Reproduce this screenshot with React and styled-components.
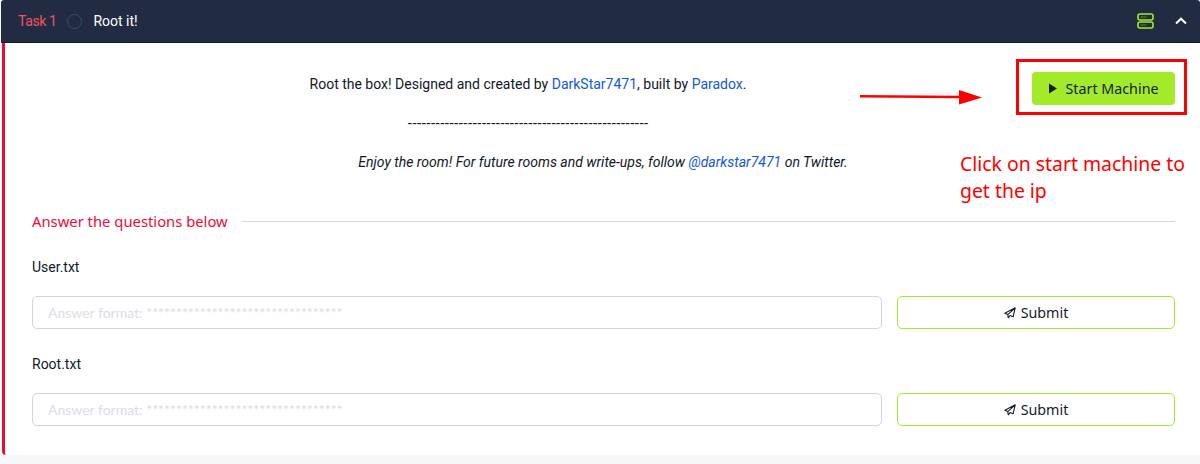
import React from "react";
import styled, { createGlobalStyle } from "styled-components";

const GlobalStyle = createGlobalStyle`
  html, body {
    margin: 0;
    padding: 0;
    background: #fff;
  }
  body {
    font-family: Roboto, "Noto Sans", sans-serif;
    color: #101828;
    overflow: hidden;
  }
`;

const Page = styled.div`
  width: 1200px;
  height: 464px;
  background: #f6f7f9;
  padding-left: 1px;
  box-sizing: border-box;
`;

const Task = styled.section`
  position: relative;
  height: 455px;
  display: flex;
  flex-direction: column;
  background: #fff;
`;

const Header = styled.header`
  height: 43px;
  flex: none;
  background: #212c42;
  border-bottom: 1px solid #141c2c;
  box-sizing: border-box;
  display: flex;
  align-items: center;
  padding: 0 13px 0 17px;
  border-radius: 3px 3px 0 0;
`;

const TaskNo = styled.span`
  font-size: 14px;
  letter-spacing: -0.4px;
  color: #f4525f;
`;

const Status = styled.span`
  width: 15px;
  height: 15px;
  box-sizing: border-box;
  margin-left: 11px;
  border: 1.5px solid #3f4b62;
  border-radius: 50%;
`;

const TaskName = styled.span`
  margin-left: 11px;
  font-size: 14px;
  color: #fff;
`;

const HeaderIcons = styled.div`
  margin-left: auto;
  display: flex;
  align-items: center;
  gap: 21px;
`;

const Body = styled.div`
  flex: 1;
  margin-left: 1px;
  border-left: 3px solid #ee0a38;
  border-radius: 0 0 0 4px;
  padding: 31px 25px 0 27px;
  display: flex;
  flex-direction: column;
`;

const Intro = styled.p`
  margin: 0 0 ${(p) => p.$gap}px;
  font-size: 14px;
  line-height: 20px;
  padding-left: ${(p) => p.$indent || 0}px;
  font-style: ${(p) => (p.$italic ? "italic" : "normal")};
  width: 992px;
  text-align: center;
  box-sizing: border-box;
`;

const DashLine = styled(Intro)`
  font-family: "Noto Sans", sans-serif;
  font-size: 14.4px;
`;

const Link = styled.a`
  color: #1257e0;
  text-decoration: none;
`;

const Divider = styled.div`
  display: flex;
  align-items: center;
  gap: 14px;
  margin-top: 39px;
  color: #ee0a38;
  font-family: "Noto Sans", sans-serif;
  font-size: 14.8px;
  line-height: 20px;
  &::after {
    content: "";
    flex: 1;
    height: 1px;
    background: #d6d8dc;
  }
`;

const Question = styled.div`
  margin-top: ${(p) => p.$top}px;
  font-size: 14px;
  line-height: 20px;
`;

const AnswerRow = styled.div`
  display: grid;
  grid-template-columns: 850px 278px;
  gap: 15px;
  margin-top: ${(p) => p.$top}px;
`;

const Input = styled.div`
  height: 33px;
  box-sizing: border-box;
  border: 1px solid #cfd4df;
  border-radius: 5px;
  padding: 0 15px;
  display: flex;
  align-items: center;
  font-family: Lato, sans-serif;
  font-size: 14px;
  color: #dadde6;
  white-space: nowrap;
`;

const SubmitButton = styled.button`
  height: 33px;
  box-sizing: border-box;
  background: #fff;
  border: 1.5px solid #a3ea2a;
  border-radius: 5px;
  display: flex;
  align-items: center;
  justify-content: center;
  gap: 5px;
  padding: 0;
  font-family: "Noto Sans", sans-serif;
  font-size: 14.3px;
  color: #151c2c;
`;

const StartBox = styled.div`
  position: absolute;
  left: 1015px;
  top: 59px;
  width: 171px;
  height: 56px;
  box-sizing: border-box;
  border: 3px solid #ff0000;
  padding: 10px 0 0 13px;
`;

const StartButton = styled.button`
  width: 143px;
  height: 33px;
  background: #a3ea2a;
  border: 0;
  border-radius: 4px;
  display: flex;
  align-items: center;
  justify-content: center;
  gap: 7px;
  padding: 0;
  font-family: "Noto Sans", sans-serif;
  font-size: 14.3px;
  color: #151c2c;
`;

const Arrow = styled.svg`
  position: absolute;
  left: 858px;
  top: 88px;
`;

const Note = styled.div`
  position: absolute;
  left: 959px;
  top: 150px;
  width: 235px;
  font-size: 19.4px;
  font-family: "Noto Sans", sans-serif;
  line-height: 27px;
  color: #ff0000;
`;

function StackIcon() {
  return (
    <svg width="17" height="16" viewBox="0 0 17 16" fill="none" stroke="#a3ea2a" strokeWidth="1.6">
      <rect x="1" y="1" width="15" height="6" rx="2" />
      <rect x="1" y="9" width="15" height="6" rx="2" />
      <path d="M3.5 4h6M3.5 12h6" stroke="#5d8a2a" strokeWidth="1" />
    </svg>
  );
}

function ChevronUp() {
  return (
    <svg width="12" height="8" viewBox="0 0 12 8" fill="none" stroke="#fff" strokeWidth="2">
      <path d="M1 6.5 6 1.7l5 4.8" />
    </svg>
  );
}

function PlayIcon() {
  return (
    <svg width="10" height="11" viewBox="0 0 10 11">
      <path d="M1 .5v10l8-5z" fill="#151c2c" />
    </svg>
  );
}

function PlaneIcon() {
  return (
    <svg width="12" height="12" viewBox="0 0 12 12" fill="none" stroke="#151c2c" strokeWidth="1.1" strokeLinejoin="round">
      <path d="M11.2.8.8 6.3l3 1.3zM11.2.8 3.8 7.6l.4 3.2 1.9-2.2 3 1.2z" />
    </svg>
  );
}

function AnswerLine({ top }) {
  return (
    <AnswerRow $top={top}>
      <Input>Answer format: *********************************</Input>
      <SubmitButton>
        <PlaneIcon />
        Submit
      </SubmitButton>
    </AnswerRow>
  );
}

export default function App() {
  return (
    <Page>
      <GlobalStyle />
      <Task>
        <Header>
          <TaskNo>Task 1</TaskNo>
          <Status />
          <TaskName>Root it!</TaskName>
          <HeaderIcons>
            <StackIcon />
            <ChevronUp />
          </HeaderIcons>
        </Header>
        <Body>
          <Intro $gap={19}>
            Root the box! Designed and created by <Link>DarkStar7471</Link>, built by <Link>Paradox</Link>.
          </Intro>
          <DashLine $gap={19}>
            ----------------------------------------------------
          </DashLine>
          <Intro $gap={0} $indent={150} $italic>
            Enjoy the room! For future rooms and write-ups, follow <Link>@darkstar7471</Link> on Twitter.
          </Intro>
          <Divider>Answer the questions below</Divider>
          <Question $top={26}>User.txt</Question>
          <AnswerLine top={19} />
          <Question $top={25}>Root.txt</Question>
          <AnswerLine top={19} />
        </Body>
        <StartBox>
          <StartButton>
            <PlayIcon />
            Start Machine
          </StartButton>
        </StartBox>
        <Arrow width="124" height="18" viewBox="0 0 124 18">
          <path d="M1 8.2 102 9" stroke="#ff0000" strokeWidth="2.4" />
          <path d="M100 2l23 7.5-23 7z" fill="#ff0000" />
        </Arrow>
        <Note>Click on start machine to get the ip</Note>
      </Task>
    </Page>
  );
}
